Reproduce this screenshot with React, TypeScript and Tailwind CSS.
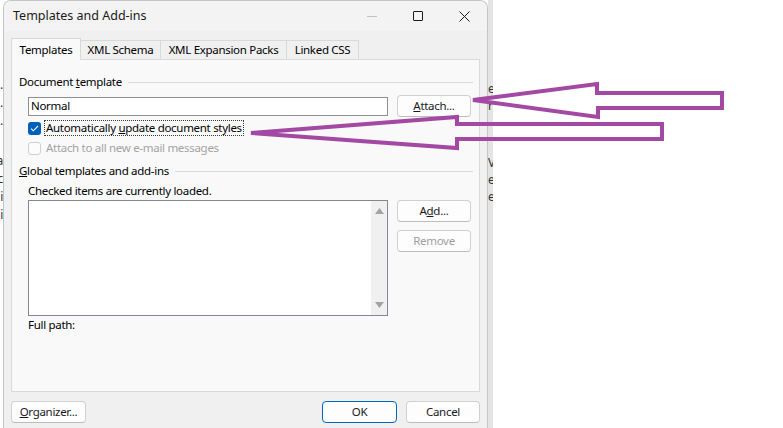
import React from "react"

const tabs = [
  { label: "Templates", w: "w-[70px]", active: true },
  { label: "XML Schema", w: "w-[81px]", active: false },
  { label: "XML Expansion Packs", w: "w-[127px]", active: false },
  { label: "Linked CSS", w: "w-[73px]", active: false },
]

function Btn({
  children,
  className = "",
  disabled = false,
  primary = false,
}: {
  children: React.ReactNode
  className?: string
  disabled?: boolean
  primary?: boolean
}) {
  return (
    <div
      className={
        "flex h-[22px] shrink-0 items-center justify-center rounded-[4px] border bg-[#fdfdfd] " +
        (primary ? "border-[#0067c0] " : "border-[#d0d0d0] border-b-[#bdbdbd] ") +
        (disabled ? "text-[#9d9d9d] " : "text-[#1a1a1a] ") +
        className
      }
    >
      {children}
    </div>
  )
}

function SectionLabel({ children }: { children: React.ReactNode }) {
  return (
    <div className="flex h-[16px] items-center">
      <span className="whitespace-nowrap">{children}</span>
      <div className="ml-[6px] h-px flex-1 bg-[#dadada]" />
    </div>
  )
}

function Caption() {
  return (
    <div className="flex h-[30px] shrink-0 items-center bg-[#f3f3f3] pl-[9px]">
      <span className="flex-1 text-[12.5px] tracking-normal text-[#1a1a1a]">Templates and Add-ins</span>
      <div className="flex h-full">
        <div className="flex w-[46px] items-center justify-center">
          <div className="h-px w-[10px] bg-[#c2c2c2]" />
        </div>
        <div className="flex w-[46px] items-center justify-center">
          <div className="h-[10px] w-[10px] rounded-[1px] border border-[#1a1a1a]" />
        </div>
        <div className="flex w-[46px] items-center justify-center">
          <svg width="11" height="11" viewBox="0 0 11 11">
            <path d="M0.5 0.5 L10.5 10.5 M10.5 0.5 L0.5 10.5" stroke="#1a1a1a" strokeWidth="1" />
          </svg>
        </div>
      </div>
    </div>
  )
}

function Dialog() {
  return (
    <div className="flex h-[440px] w-[485px] shrink-0 flex-col overflow-hidden rounded-t-[8px] border border-b-0 border-[#c4c4c4] bg-[#f0f0f0]">
      <Caption />

      <div className="flex flex-col px-[7px] pt-[7px]">
        {/* tab strip */}
        <div className="flex h-[21px] items-end">
          {tabs.map((t) =>
            t.active ? (
              <div
                key={t.label}
                className={`relative z-10 -mb-px flex h-[22px] items-center justify-center border border-b-0 border-[#d9d9d9] bg-[#f9f9f9] ${t.w}`}
              >
                {t.label}
              </div>
            ) : (
              <div
                key={t.label}
                className={`-ml-px flex h-[19px] items-center justify-center border border-b-0 border-[#d9d9d9] bg-[#f0f0f0] ${t.w}`}
              >
                {t.label}
              </div>
            )
          )}
        </div>

        {/* tab panel */}
        <div className="flex h-[333px] flex-col border border-[#d9d9d9] bg-[#f9f9f9] pl-[7px] pr-[6px] pt-[14px]">
          <SectionLabel>
            Document <u>t</u>emplate
          </SectionLabel>

          <div className="mt-[5px] flex items-center pl-[9px] pr-px">
            <div className="flex h-[19px] w-[360px] items-center border border-[#8f8f8f] bg-white pl-[2px]">
              Normal
            </div>
            <Btn className="ml-[9px] w-[74px]">
              <span>
                <u>A</u>ttach...
              </span>
            </Btn>
          </div>

          <div className="mt-[3px] flex h-[16px] items-center pl-[9px]">
            <div className="flex h-[13px] w-[13px] items-center justify-center rounded-[3px] bg-[#005fb8]">
              <svg width="9" height="7" viewBox="0 0 9 7">
                <path d="M1 3.6 L3.3 5.8 L8 1" stroke="white" strokeWidth="1.1" fill="none" />
              </svg>
            </div>
            <span className="ml-[3px] border border-dotted border-[#3a3a3a] px-px leading-[14px]">
              Automatically <u>u</u>pdate document styles
            </span>
          </div>

          <div className="mt-[4px] flex h-[16px] items-center pl-[9px] text-[#a3a3a3]">
            <div className="h-[13px] w-[13px] rounded-[3px] border border-[#cfcfcf] bg-[#fcfcfc]" />
            <span className="ml-[4px] pl-px">Attach to all new e-mail messages</span>
          </div>

          <div className="mt-[7px]">
            <SectionLabel>
              <u>G</u>lobal templates and add-ins
            </SectionLabel>
          </div>

          <div className="mt-[4px] flex h-[16px] items-center pl-[9px]">
            Checked items are currently loaded.
          </div>

          <div className="mt-px flex pl-[9px] pr-px">
            <div className="flex h-[116px] w-[360px] border border-[#828790] bg-white">
              <div className="flex-1" />
              <div className="flex w-[16px] flex-col items-center justify-between bg-[#f0f0f0] py-[7px]">
                <svg width="9" height="6" viewBox="0 0 9 6">
                  <path d="M4.5 0 L9 6 L0 6 Z" fill="#a3a3a3" />
                </svg>
                <svg width="9" height="6" viewBox="0 0 9 6">
                  <path d="M0 0 L9 0 L4.5 6 Z" fill="#a3a3a3" />
                </svg>
              </div>
            </div>
            <div className="ml-[9px] flex flex-col gap-[8px]">
              <Btn className="w-[74px]">
                <span>
                  A<u>d</u>d...
                </span>
              </Btn>
              <Btn className="w-[74px]" disabled>
                Remove
              </Btn>
            </div>
          </div>

          <div className="mt-px flex h-[16px] items-center pl-[9px]">Full path:</div>
        </div>

        {/* footer buttons */}
        <div className="mt-[9px] flex items-center">
          <Btn className="w-[75px]">
            <span>
              <u>O</u>rganizer...
            </span>
          </Btn>
          <div className="flex-1" />
          <Btn className="w-[75px]" primary>
            OK
          </Btn>
          <Btn className="ml-[9px] w-[74px]">Cancel</Btn>
        </div>
      </div>
    </div>
  )
}

function Arrows() {
  return (
    <svg className="pointer-events-none absolute left-0 top-0" width="783" height="428" viewBox="0 0 783 428">
      <polygon
        points="473,100 597,84 597,93 722,93 722,108 598,108 598,117"
        fill="none"
        stroke="#a349a4"
        strokeWidth="4"
      />
      <polygon
        points="251,133 457,117 457,124 662,124 662,139 457,139 457,148"
        fill="none"
        stroke="#a349a4"
        strokeWidth="4"
      />
    </svg>
  )
}

export default function App() {
  return (
    <div className="relative flex h-[428px] w-[783px] overflow-hidden bg-white font-['Noto_Sans',sans-serif] text-[11.5px] leading-[16px] tracking-[-0.3px] text-black">
      {/* document peeking out on the left */}
      <div className="flex w-[3px] shrink-0 flex-col items-end overflow-hidden pt-[80px] text-[12px] leading-[18px] text-[#333]">
        <span className="whitespace-nowrap">·</span>
        <span className="whitespace-nowrap">·</span>
        <span className="whitespace-nowrap">·</span>
        <span className="mt-[18px] whitespace-nowrap">ta</span>
        <span className="whitespace-nowrap">oc</span>
        <span className="whitespace-nowrap">di</span>
        <span className="whitespace-nowrap">hi</span>
      </div>

      <Dialog />

      {/* shadow strip with document text */}
      <div className="flex w-[5px] shrink-0 flex-col overflow-hidden bg-[#e4e4e4] pt-[80px] text-[12px] leading-[17px] text-[#333]">
        <span className="whitespace-nowrap">e</span>
        <span className="whitespace-nowrap">r</span>
        <span className="mt-[40px] whitespace-nowrap">V</span>
        <span className="whitespace-nowrap">e</span>
        <span className="whitespace-nowrap">e</span>
      </div>

      <div className="flex-1 bg-white" />

      <Arrows />
    </div>
  )
}
